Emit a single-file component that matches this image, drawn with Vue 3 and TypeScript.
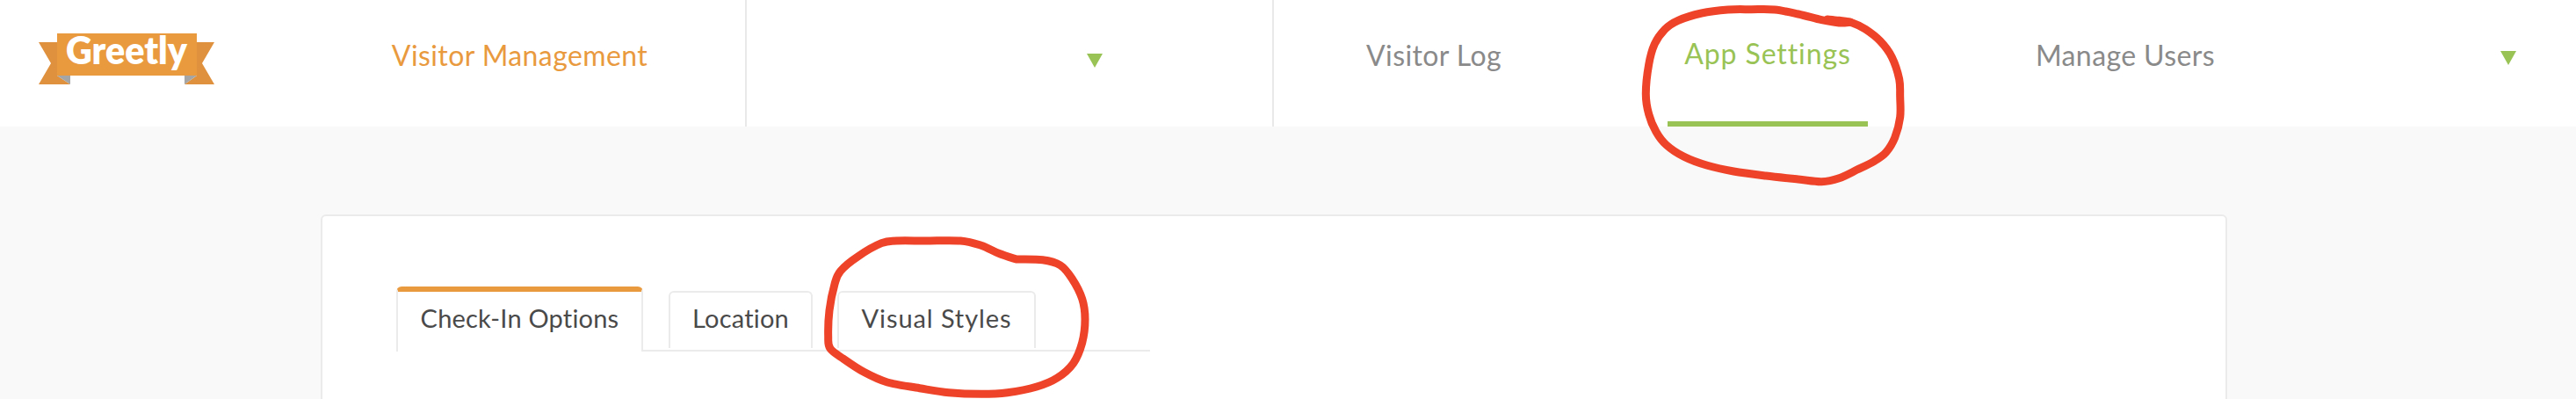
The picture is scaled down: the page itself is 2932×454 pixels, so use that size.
<template>
  <div class="page">
    <header class="topbar">
      <div class="brand">
        <svg class="logo" width="200" height="70" viewBox="0 -12 200 70">
          <polygon points="0,10 21,10 21,48 36,58 0,58 14,34" fill="#e0913d" />
          <polygon points="200,10 180,10 180,48 166,58 200,58 186,34" fill="#e0913d" />
          <polygon points="21,48 36,48 36,58" fill="#a5a5a5" />
          <polygon points="180,48 166,48 166,58" fill="#a5a5a5" />
          <rect x="21" y="0" width="159" height="48" fill="#e99a3f" />
          <text x="31" y="35" class="logo-text" textLength="138" lengthAdjust="spacingAndGlyphs">Greetly</text>
        </svg>
      </div>
      <div class="nav-cell nav-text cell-primary">Visitor Management</div>
      <div class="nav-cell cell-select">
        <span class="caret caret-select"></span>
      </div>
      <div class="nav-cell nav-text cell-log">Visitor Log</div>
      <div class="nav-cell cell-settings">
        <span class="active-link">App Settings</span>
      </div>
      <div class="nav-cell nav-text cell-users">Manage Users</div>
      <div class="nav-cell cell-more">
        <span class="caret caret-more"></span>
      </div>
    </header>

    <main class="content">
      <section class="card">
        <div class="tabs">
          <div
            v-for="tab in tabs"
            :key="tab"
            class="tab"
            :class="{ active: tab === activeTab }"
          >
            {{ tab }}
          </div>
        </div>
      </section>
    </main>

    <!-- hand drawn marks on top of the screenshot -->
    <svg class="scribbles" width="2932" height="454" viewBox="0 0 2932 454">
      <path v-for="(d, i) in scribbles" :key="i" :d="d" class="scribble" />
    </svg>
  </div>
</template>

<script setup lang="ts">
type Point = [number, number];

const tabs: string[] = ['Check-In Options', 'Location', 'Visual Styles'];
const activeTab = 'Check-In Options';

// traced at 3x from the crop origin
const settingsMark: Point[] = [
  [660, 66], [700, 70], [745, 78], [790, 100], [840, 140], [880, 195], [905, 270], [908, 330],
  [908, 400], [890, 470], [860, 520], [820, 550], [760, 580], [700, 608], [640, 620], [560, 612],
  [450, 600], [340, 585], [250, 565], [170, 535], [110, 495], [75, 450], [50, 390], [40, 320],
  [50, 220], [70, 150], [105, 100], [150, 70], [230, 45], [320, 33], [400, 32], [480, 33],
  [560, 48], [640, 68], [700, 78], [740, 76],
];
const stylesMark: Point[] = [
  [710, 105], [800, 107], [860, 125], [900, 170], [935, 240], [945, 310], [935, 390], [905, 460],
  [850, 510], [780, 540], [680, 560], [590, 565], [480, 560], [380, 545], [270, 525], [190, 490],
  [120, 445], [75, 410], [68, 370], [72, 280], [90, 190], [110, 145], [170, 95], [250, 50],
  [300, 42], [400, 42], [520, 42], [590, 58], [650, 85], [710, 105],
];

function toPath(points: Point[], ox: number, oy: number): string {
  const p = points.map(([x, y]): Point => [x / 3 + ox, y / 3 + oy]);
  let d = `M${p[0][0]} ${p[0][1]}`;
  for (let i = 0; i < p.length - 1; i++) {
    const a = p[Math.max(i - 1, 0)];
    const b = p[i];
    const c = p[i + 1];
    const e = p[Math.min(i + 2, p.length - 1)];
    const c1x = b[0] + (c[0] - a[0]) / 6;
    const c1y = b[1] + (c[1] - a[1]) / 6;
    const c2x = c[0] - (e[0] - b[0]) / 6;
    const c2y = c[1] - (e[1] - b[1]) / 6;
    d += ` C${c1x.toFixed(1)} ${c1y.toFixed(1)} ${c2x.toFixed(1)} ${c2y.toFixed(1)} ${c[0].toFixed(1)} ${c[1].toFixed(1)}`;
  }
  return d;
}

const scribbles: string[] = [toPath(settingsMark, 1860, 0), toPath(stylesMark, 920, 260)];
</script>

<style>
html,
body {
  margin: 0;
  background: #f9f9f9;
  overflow: hidden;
}
</style>

<style scoped>
.page {
  position: relative;
  height: 454px;
  overflow: hidden;
  font-family: Lato, "Open Sans", sans-serif;
}
.topbar {
  display: flex;
  height: 144px;
  background: #fff;
}
.brand {
  width: 291px;
  padding: 26px 0 0 44px;
}
.logo {
  display: block;
}
.logo-text {
  fill: #fff;
  font-family: Lato, sans-serif;
  font-weight: 800;
  font-size: 43px;
}
.nav-cell {
  display: flex;
  align-items: center;
  justify-content: center;
  box-sizing: border-box;
  height: 144px;
  color: #8a8a8a;
  font-size: 32px;
  letter-spacing: 0.4px;
}
.nav-text {
  padding-bottom: 20px;
}
.cell-primary {
  width: 515px;
  color: #e99a3f;
  border-right: 2px solid #e9e9e9;
}
.cell-select {
  width: 600px;
  justify-content: flex-end;
  padding-right: 193px;
  border-right: 2px solid #e9e9e9;
}
.cell-log {
  width: 364px;
}
.cell-settings {
  width: 396px;
}
.active-link {
  display: flex;
  align-items: center;
  justify-content: center;
  box-sizing: border-box;
  width: 228px;
  height: 144px;
  padding-bottom: 18px;
  color: #99c355;
  letter-spacing: 0.9px;
  border-bottom: 6px solid #99c355;
}
.cell-users {
  width: 418px;
}
.cell-more {
  flex: 1;
  justify-content: flex-end;
  padding-right: 68px;
}
.caret {
  width: 0;
  height: 0;
  border-left: 9px solid transparent;
  border-right: 9px solid transparent;
  border-top: 16px solid #99c355;
}
.caret-select {
  margin-bottom: 6px;
}
.caret-more {
  margin-bottom: 12px;
}
.content {
  padding: 100px 0 0 365px;
}
.card {
  box-sizing: border-box;
  width: 2170px;
  height: 500px;
  padding: 80px 0 0 84px;
  background: #fff;
  border: 2px solid #ebebeb;
  border-radius: 6px;
}
.tabs {
  display: flex;
  align-items: flex-end;
  gap: 28px;
  width: 858px;
  height: 72px;
  border-bottom: 2px solid #ebebeb;
}
.tab {
  box-sizing: border-box;
  height: 65px;
  margin-bottom: 2px;
  color: #4a4a4a;
  font-size: 29px;
  line-height: 58px;
  letter-spacing: 0.2px;
  text-align: center;
  border: 2px solid #ebebeb;
  border-bottom: 0;
  border-radius: 6px 6px 0 0;
  background: #fff;
}
.tab:nth-child(1) {
  width: 281px;
  margin-right: 1px;
}
.tab:nth-child(2) {
  width: 164px;
}
.tab:nth-child(3) {
  width: 226px;
  letter-spacing: 0.9px;
}
.tab.active {
  height: 74px;
  margin-bottom: -2px;
  line-height: 60px;
  border-top: 6px solid #e99a3f;
}
.scribbles {
  position: absolute;
  top: 0;
  left: 0;
  pointer-events: none;
}
.scribble {
  fill: none;
  stroke: #ee4328;
  stroke-width: 9;
  stroke-linecap: round;
  stroke-linejoin: round;
}
</style>
